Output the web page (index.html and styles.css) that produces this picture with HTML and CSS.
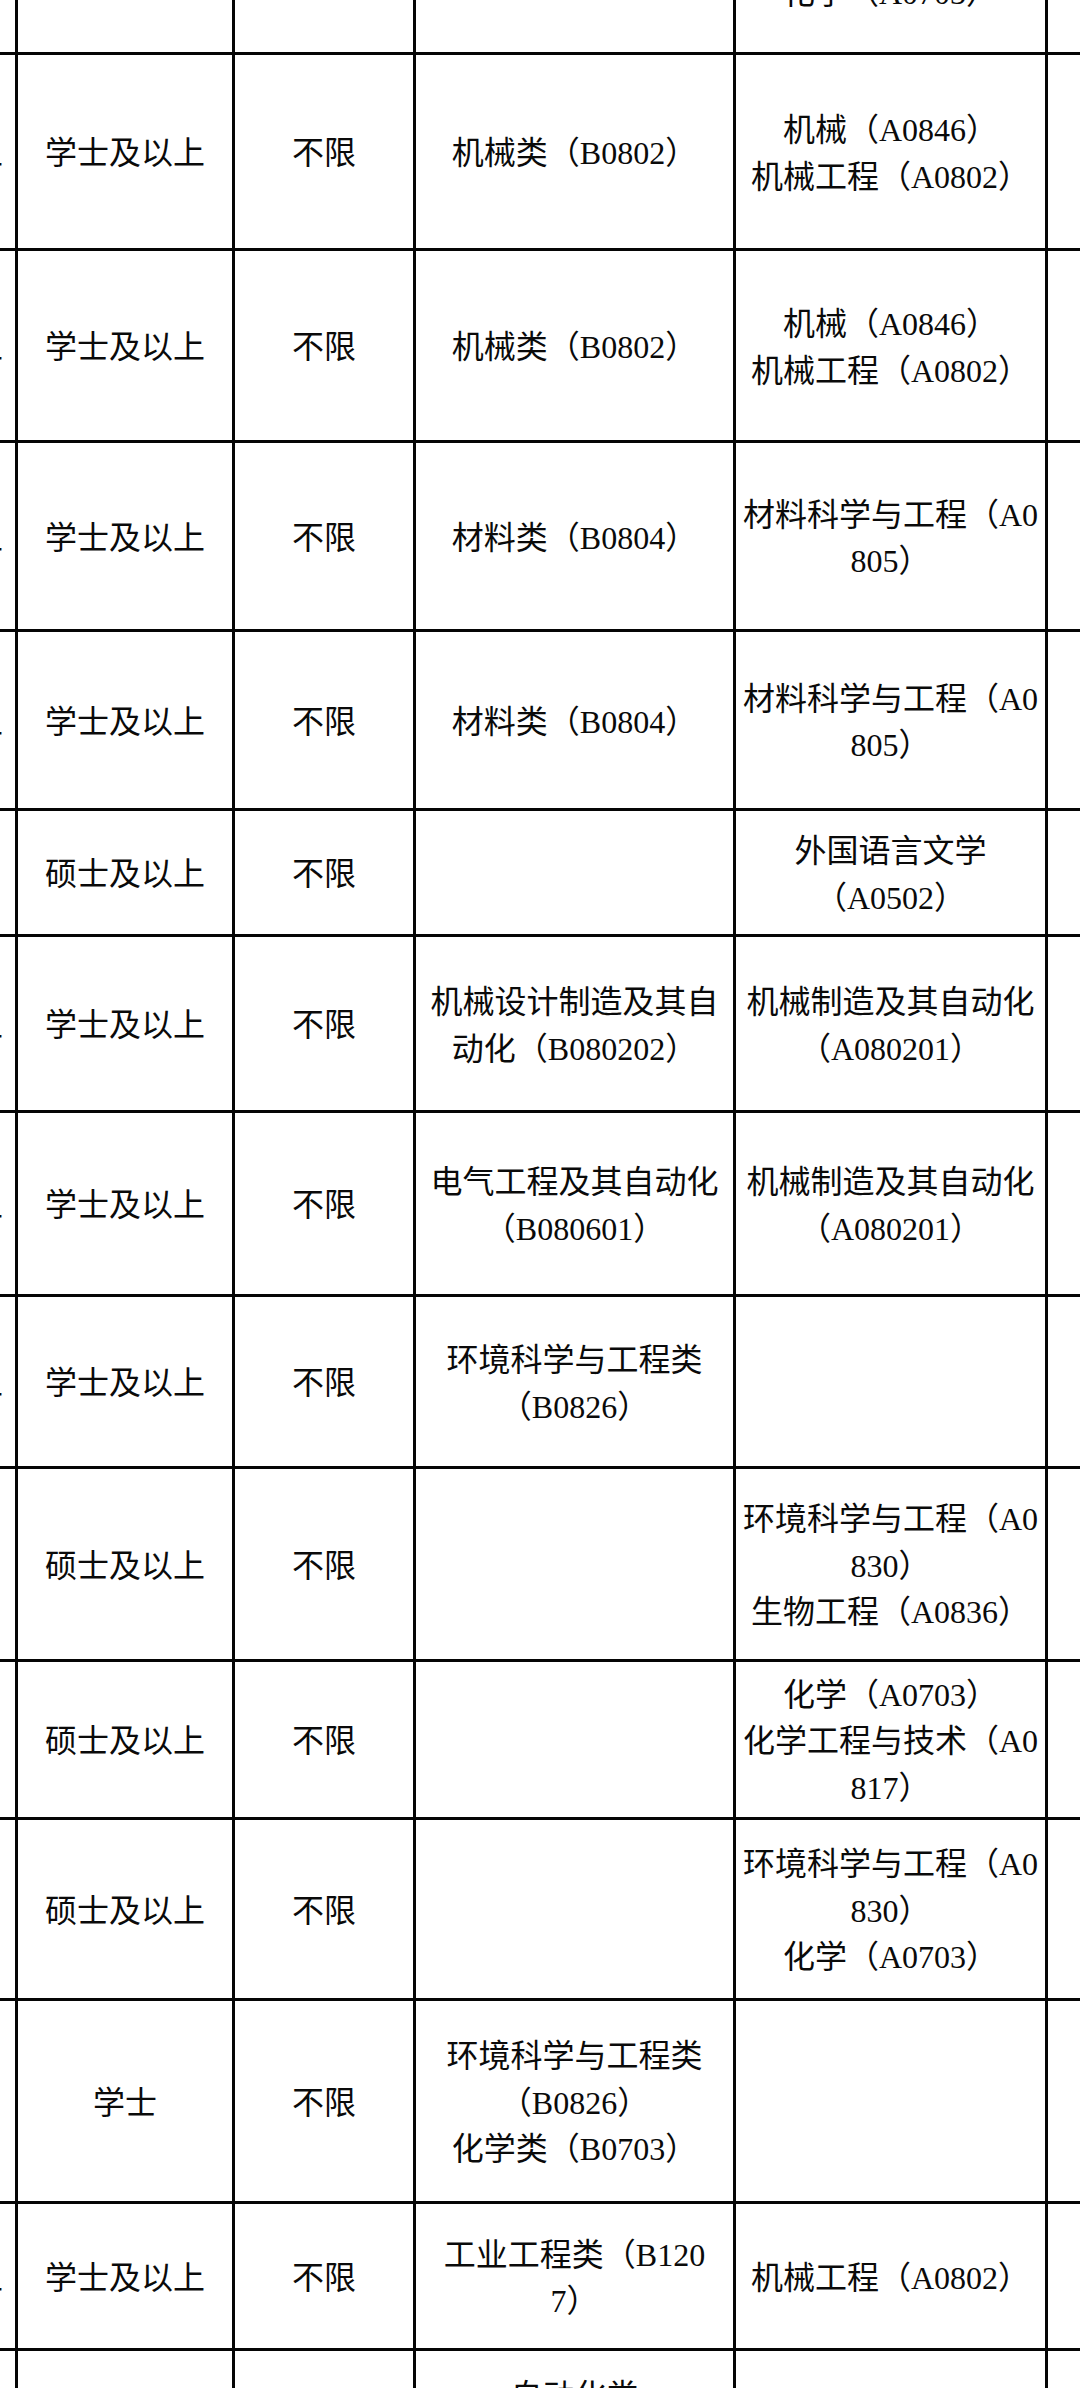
FILE: index.html
```html
<!DOCTYPE html>
<html lang="zh-CN">
<head>
<meta charset="utf-8">
<title>招聘岗位表</title>
<link rel="stylesheet" href="styles.css">
</head>
<body>
<div class="sheet">
  <div class="cell">研究生</div><div class="cell">硕士及以上</div><div class="cell">不限</div><div class="cell"></div><div class="cell">环境科学与工程（A0<br>830）<br>化学（A0703）</div><div class="cell"></div>

  <div class="cell">本科及以上</div><div class="cell">学士及以上</div><div class="cell">不限</div><div class="cell">机械类（B0802）</div><div class="cell">机械（A0846）<br>机械工程（A0802）</div><div class="cell"></div>

  <div class="cell">本科及以上</div><div class="cell">学士及以上</div><div class="cell">不限</div><div class="cell">机械类（B0802）</div><div class="cell">机械（A0846）<br>机械工程（A0802）</div><div class="cell"></div>

  <div class="cell">本科及以上</div><div class="cell">学士及以上</div><div class="cell">不限</div><div class="cell">材料类（B0804）</div><div class="cell">材料科学与工程（A0<br>805）</div><div class="cell"></div>

  <div class="cell">本科及以上</div><div class="cell">学士及以上</div><div class="cell">不限</div><div class="cell">材料类（B0804）</div><div class="cell">材料科学与工程（A0<br>805）</div><div class="cell"></div>

  <div class="cell">研究生</div><div class="cell">硕士及以上</div><div class="cell">不限</div><div class="cell"></div><div class="cell">外国语言文学<br>（A0502）</div><div class="cell"></div>

  <div class="cell">本科及以上</div><div class="cell">学士及以上</div><div class="cell">不限</div><div class="cell">机械设计制造及其自<br>动化（B080202）</div><div class="cell">机械制造及其自动化<br>（A080201）</div><div class="cell"></div>

  <div class="cell">本科及以上</div><div class="cell">学士及以上</div><div class="cell">不限</div><div class="cell">电气工程及其自动化<br>（B080601）</div><div class="cell">机械制造及其自动化<br>（A080201）</div><div class="cell"></div>

  <div class="cell">本科及以上</div><div class="cell">学士及以上</div><div class="cell">不限</div><div class="cell">环境科学与工程类<br>（B0826）</div><div class="cell"></div><div class="cell"></div>

  <div class="cell">研究生</div><div class="cell">硕士及以上</div><div class="cell">不限</div><div class="cell"></div><div class="cell">环境科学与工程（A0<br>830）<br>生物工程（A0836）</div><div class="cell"></div>

  <div class="cell">研究生</div><div class="cell">硕士及以上</div><div class="cell">不限</div><div class="cell"></div><div class="cell">化学（A0703）<br>化学工程与技术（A0<br>817）</div><div class="cell"></div>

  <div class="cell">研究生</div><div class="cell">硕士及以上</div><div class="cell">不限</div><div class="cell"></div><div class="cell">环境科学与工程（A0<br>830）<br>化学（A0703）</div><div class="cell"></div>

  <div class="cell">本科</div><div class="cell">学士</div><div class="cell">不限</div><div class="cell">环境科学与工程类<br>（B0826）<br>化学类（B0703）</div><div class="cell"></div><div class="cell"></div>

  <div class="cell">本科及以上</div><div class="cell">学士及以上</div><div class="cell">不限</div><div class="cell">工业工程类（B120<br>7）</div><div class="cell">机械工程（A0802）</div><div class="cell"></div>

  <div class="cell">本科及以上</div><div class="cell">学士及以上</div><div class="cell">不限</div><div class="cell">自动化类<br>（B0808）<br>电子信息类（B0807）</div><div class="cell">控制科学与工程<br>（A0811）</div><div class="cell"></div>
</div>
</body>
</html>
```

FILE: styles.css
```css
html, body {
  margin: 0;
  padding: 0;
  background: #ffffff;
  overflow: hidden;
}

body {
  width: 1080px;
  height: 2388px;
}

.sheet {
  display: grid;
  grid-template-columns: 184px 214px 178px 317px 309px 200px;
  grid-template-rows: 214px 193px 189px 186px 176px 123px 173px 181px 169px 190px 155px 178px 200px 144px 180px;
  gap: 3px;
  background: #050505;
  width: max-content;
  margin-left: -169px;
  margin-top: -162px;
  font-family: "Liberation Serif", "Noto Sans CJK SC", serif;
  font-size: 32px;
  line-height: 46.5px;
  color: #0a0a0a;
}

.cell {
  background: #ffffff;
  display: flex;
  align-items: center;
  justify-content: center;
  text-align: center;
  white-space: nowrap;
  padding-top: 4px;
  box-sizing: border-box;
  overflow: hidden;
}
```
